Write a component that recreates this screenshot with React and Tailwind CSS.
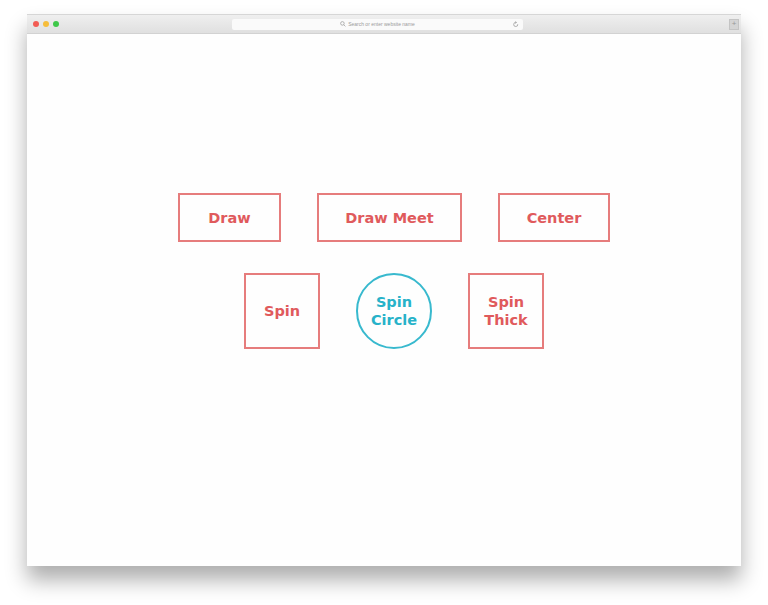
import React from "react";

const font = { fontFamily: '"DejaVu Sans", Verdana, sans-serif' };

function Box({ w, h, children, round }) {
  return (
    <div
      className={`flex items-center justify-center text-center font-bold text-[14.5px] leading-[18px] border-2 ${
        round ? "rounded-full border-[#38b9ce] text-[#27b2c9]" : "border-[#e67c7c] text-[#e05a5c]"
      } ${w} ${h}`}
      style={font}
    >
      {children}
    </div>
  );
}

export default function App() {
  return (
    <div className="w-[768px] h-[605px] bg-white overflow-hidden pl-[27px] pt-[14px]">
      <div className="w-[714px] shadow-[0_14px_20px_rgba(0,0,0,0.32)]">
        {/* Title bar */}
        <div className="h-[20px] flex items-center border-t border-[#d6d6d6] bg-gradient-to-b from-[#efefef] to-[#e0e0e0] border-b border-b-[#d2d2d2] relative">
          <div className="flex items-center gap-[4px] pl-[6px]">
            <div className="w-[6px] h-[6px] rounded-full bg-[#f25c54]" />
            <div className="w-[6px] h-[6px] rounded-full bg-[#f6bd3b]" />
            <div className="w-[6px] h-[6px] rounded-full bg-[#3fc84a]" />
          </div>
          <div className="ml-[173px] w-[291px] h-[11px] bg-[#fafafa] rounded-[2px] flex items-center relative">
            <div className="flex-1 flex items-center justify-center gap-[2px] text-[#9a9a9a] text-[5px] leading-none" style={{ fontFamily: '"Liberation Sans", Arial, sans-serif' }}>
              <svg width="6" height="6" viewBox="0 0 10 10" fill="none" stroke="#999" strokeWidth="1.2">
                <circle cx="4" cy="4" r="3" />
                <path d="M6.2 6.2 9 9" />
              </svg>
              <span>Search or enter website name</span>
            </div>
            <svg className="absolute right-[4px] top-[2px]" width="6" height="7" viewBox="0 0 10 12" fill="none" stroke="#999" strokeWidth="1.3">
              <path d="M8 5.5A3.5 3.5 0 1 1 5 2.5" />
              <path d="M4 0.8 6 2.5 4 4.2" />
            </svg>
          </div>
          <div className="ml-auto mr-[2px] w-[10px] h-[11px] bg-[#d4d4d4] border border-[#c4c4c4] flex items-center justify-center text-[#999] text-[8px] leading-none" style={{ fontFamily: '"Liberation Sans", Arial, sans-serif' }}>
            +
          </div>
        </div>
        {/* Content */}
        <div className="h-[532px] bg-[#fefefe] pt-[159px] pl-[20px] flex flex-col items-center gap-[31px]">
          <div className="flex gap-[36px]">
            <Box w="w-[103px]" h="h-[49px]">Draw</Box>
            <Box w="w-[145px]" h="h-[49px]">Draw Meet</Box>
            <Box w="w-[112px]" h="h-[49px]">Center</Box>
          </div>
          <div className="flex gap-[36px]">
            <Box w="w-[76px]" h="h-[76px]">Spin</Box>
            <Box w="w-[76px]" h="h-[76px]" round>
              Spin
              <br />
              Circle
            </Box>
            <Box w="w-[76px]" h="h-[76px]">
              Spin
              <br />
              Thick
            </Box>
          </div>
        </div>
      </div>
    </div>
  );
}
